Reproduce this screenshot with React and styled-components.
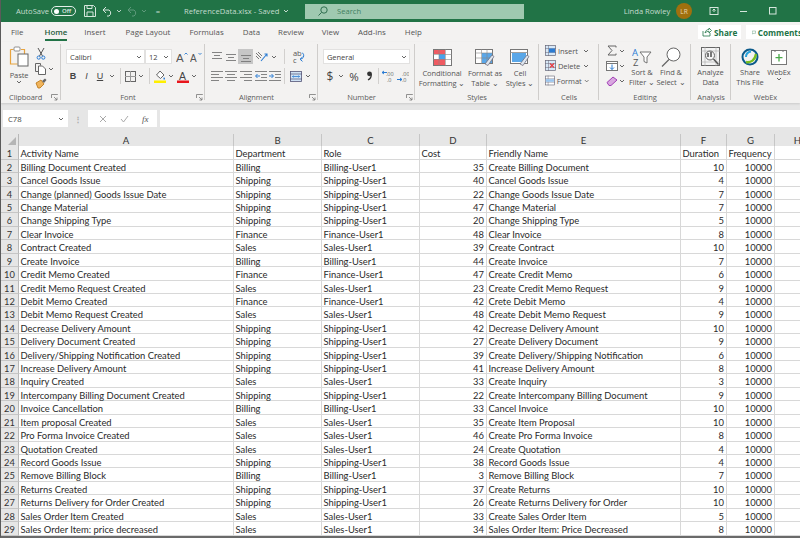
import React from "react";
import styled, { createGlobalStyle } from "styled-components";

const Global = createGlobalStyle`
  html, body { margin: 0; padding: 0; background: #f3f2f1; }
  #root { width: 800px; height: 538px; overflow: hidden; }
`;

const UI = `"Open Sans", "Noto Sans", sans-serif`;

const Page = styled.div`
  width: 800px; height: 538px; box-sizing: border-box; overflow: hidden;
  display: flex; flex-direction: column;
  border-left: 1px solid #5a5a5a; border-bottom: 2px solid #6a6a6a;
  background: #e6e6e6; font-family: ${UI}; color: #444;
`;

/* ---------- title bar ---------- */
const TitleBar = styled.div`
  height: 22px; flex: none; background: #217346; color: #c4dccf;
  display: flex; align-items: center; font-size: 7.6px; overflow: hidden;
`;
const TitleCell = styled.div`
  flex: none; width: ${p => p.$w}px; margin-left: ${p => p.$ml || 0}px;
  display: flex; align-items: center; justify-content: ${p => p.$left ? "flex-start" : "center"};
  white-space: nowrap;
`;
const Toggle = styled.div`
  width: 25px; height: 10px; box-sizing: border-box; border: 1px solid #e4efe9; border-radius: 6px;
  display: flex; align-items: center; gap: 3px; padding-left: 2px; font-size: 6px; color: #e4efe9; font-weight: 600;
  &::before { content: ""; width: 5px; height: 5px; border-radius: 50%; background: #fff; }
`;
const SearchBox = styled.div`
  width: 219px; height: 15px; flex: none; background: #9fc9b0; color: #3f7f5f;
  display: flex; align-items: center; gap: 9px; padding-left: 13px; box-sizing: border-box; font-size: 7.6px;
`;
const Avatar = styled.div`
  width: 16px; height: 16px; border-radius: 50%; background: #a0700e; color: #e8d9b8;
  font-size: 6.5px; display: flex; align-items: center; justify-content: center; flex: none;
`;

/* ---------- tabs ---------- */
const TabBar = styled.div`
  height: 20px; flex: none; background: #f3f2f1; display: flex; align-items: center;
  padding-left: 10px; font-size: 7.9px; position: relative; color: #555;
`;
const Tab = styled.div`
  margin-right: ${p => p.$mr}px; position: relative; white-space: nowrap; line-height: 20px;
  ${p => p.$active && `color: #1f5c3c; font-weight: 600;
    &::after { content: ""; position: absolute; left: 0; right: 0; bottom: 1px; height: 2px; background: #217346; }`}
`;
const TabSpacer = styled.div`flex: 1;`;
const ActionButton = styled.div`
  height: 14px; width: ${p => p.$w}px; margin-right: ${p => p.$mr || 0}px; flex: none; background: #fff; color: #217346; font-weight: 700; font-size: 8.2px;
  display: flex; align-items: center; gap: 2px; padding-left: ${p => p.$pl}px; box-sizing: border-box; overflow: hidden; white-space: nowrap;
`;

/* ---------- ribbon ---------- */
const Ribbon = styled.div`
  height: 61px; flex: none; background: #f3f2f1; display: flex;
  box-shadow: 0 1px 2px rgba(0,0,0,.12); font-size: 7.5px; letter-spacing: -.08px; position: relative;
`;
const Group = styled.div`
  width: ${p => p.$w}px; flex: none; box-sizing: border-box; display: flex; flex-direction: column; position: relative;
  &::after { content: ""; position: absolute; right: 0; top: 2px; bottom: 3px; width: 1px; background: ${p => p.$nosep ? "transparent" : "#cfcdcb"}; }
`;
const GroupBody = styled.div`
  height: 49px; flex: none; display: flex; box-sizing: border-box; padding-left: ${p => p.$pl || 0}px;
`;
const GroupLabel = styled.div`
  flex: 1; text-align: ${p => p.$left ? "left" : "center"}; font-size: 7.5px; line-height: 13px; color: #5c5c5c;
  padding-left: ${p => p.$left ? 8 : 0}px; padding-right: ${p => p.$pr || 0}px;
`;
const Launcher = styled.svg`
  position: absolute; right: ${p => p.$r}px; bottom: 2px; width: 7px; height: 7px;
`;
const Stack = styled.div`
  display: flex; flex-direction: column; width: ${p => p.$w ? `${p.$w}px` : "auto"};
  padding-top: ${p => p.$pt ?? 7}px; gap: ${p => p.$gap ?? 4}px;
`;
const ToolRow = styled.div`
  display: flex; align-items: center; height: ${p => p.$h || 16}px;
`;
const Tool = styled.div`
  width: ${p => p.$w}px; height: 100%; flex: none; display: flex; align-items: center; justify-content: center;
  color: #444; font-size: ${p => p.$fs || 9}px; font-weight: ${p => p.$fw || 400}; font-style: ${p => p.$it ? "italic" : "normal"};
  text-decoration: ${p => p.$ul ? "underline" : "none"}; font-family: ${p => p.$serif ? `"Liberation Sans", sans-serif` : "inherit"};
  background: ${p => p.$active ? "#c6c6c6" : "transparent"};
`;
const Separator = styled.div`
  width: ${p => p.$w}px; flex: none; height: 100%; display: flex; justify-content: center;
  &::before { content: ""; width: 1px; background: #d2d0ce; height: 100%; }
`;
const LargeButton = styled.div`
  width: ${p => p.$w}px; flex: none; display: flex; flex-direction: column; align-items: center;
  padding-top: ${p => p.$pt ?? 5}px; color: #555; text-align: center; line-height: 10.2px; white-space: nowrap;
`;
const LargeIcon = styled.div`
  height: ${p => p.$h || 21}px; flex: none; display: flex; align-items: center; justify-content: center;
`;
const PasteLabel = styled.span`margin-top: 3px;`;
const InputBox = styled.div`
  width: ${p => p.$w}px; height: 15px; flex: none; box-sizing: border-box; background: #fff; color: #444; font-size: 7.5px;
  display: flex; align-items: center; justify-content: space-between; padding: 0 2px 0 3px;
  border: 1px solid #e2e1e0; margin-right: ${p => p.$mr || 0}px;
`;
const CellCmd = styled.div`
  display: flex; align-items: center; height: 15px; gap: 2px; width: 44px; color: #555; font-size: 7.5px;
  span { flex: 1; }
`;

/* ---------- formula ---------- */
const FormulaBar = styled.div`
  flex: none; height: 17px; margin-top: 7px; display: flex; background: #e6e6e6;
`;
const NameBox = styled.div`
  width: 65px; margin-left: 2px; background: #fff; font-size: 7.7px; color: #444; box-sizing: border-box;
  display: flex; align-items: center; justify-content: space-between; padding: 0 4px 0 5px; flex: none;
`;
const Grip = styled.div`
  width: 20px; flex: none; display: flex; align-items: center; justify-content: center; color: #aaa; font-size: 8px; font-weight: 700;
`;
const FnBox = styled.div`
  width: 69px; flex: none; background: #fff; display: flex; align-items: center; justify-content: space-around; padding: 0 2px 0 4px; box-sizing: border-box; color: #999;
`;
const FxLabel = styled.span`
  font-family: "Liberation Serif", serif; font-style: italic; font-size: 9px; color: #555;
`;
const FormulaInput = styled.div`
  flex: 1; background: #fff; margin-left: 3px;
`;

/* ---------- sheet ---------- */
const Sheet = styled.div`
  margin-top: 7px; flex: 1; background: #fff; display: grid; overflow: hidden;
  grid-template-columns: 18px 215px 88px 98px 67px 194px 46px 48px 46px;
  grid-template-rows: 12.3px repeat(29, 13.43px); font-family: Lato, "Liberation Sans", sans-serif; font-size: 9.38px; color: #2a2a2a;
`;
const Corner = styled.div`
  background: #e6e6e6; border-right: 1px solid #b8b8b8; display: flex; align-items: flex-end; justify-content: flex-end; padding: 0 2px 1px 0; box-sizing: border-box;
`;
const ColHead = styled.div`
  background: #e6e6e6; border-right: 1px solid #c6c6c6; box-sizing: border-box; text-align: center; line-height: 14px; color: #333; font-size: 9.6px;
`;
const RowHead = styled.div`
  background: #e6e6e6; border-right: 1px solid #b8b8b8; border-bottom: 1px solid #c6c6c6; box-sizing: border-box; text-align: center; line-height: 15px; color: #333; font-size: 9.3px;
`;
const Cell = styled.div`
  box-sizing: border-box; border-right: 1px solid #d8d8d8; border-bottom: 1px solid #d8d8d8; padding: 0 2px 0 1.5px;
  line-height: 15px; white-space: nowrap; overflow: visible; text-align: ${p => p.$num ? "right" : "left"};
`;

/* ---------- icons ---------- */
const Svg = ({ w = 14, h = 14, vb, children }) => (
  <svg width={w} height={h} viewBox={vb || `0 0 ${w} ${h}`} fill="none" stroke="none">{children}</svg>
);
const Chev = ({ c = "#666" }) => (
  <Svg w={6} h={4}><path d="M1 1l2 2 2-2" stroke={c} strokeWidth="1" /></Svg>
);
const LaunchIcon = ({ r }) => (
  <Launcher $r={r} viewBox="0 0 7 7" fill="none"><path d="M.5 4V.5H6.5V1M3 3l3 3M6 3.5V6H3.5" stroke="#777" strokeWidth=".8" /></Launcher>
);
const Lines = ({ kind = "left", w = 12 }) => {
  const widths = [12, 8, 12, 8];
  return (
    <Svg w={w} h={12}>
      {widths.map((l, i) => {
        const x = kind === "left" ? 0 : kind === "right" ? 12 - l : (12 - l) / 2;
        return <path key={i} d={`M${x} ${1.5 + i * 3}h${l}`} stroke="#777" strokeWidth=".9" />;
      })}
    </Svg>
  );
};
const VAlign = ({ y }) => (
  <Svg w={12} h={12}>
    <path d={`M1 ${y}h10M3 ${y + 3}h6M1 ${y + 6}h10`} stroke="#777" strokeWidth=".9" />
  </Svg>
);
const Indent = ({ flip }) => (
  <Svg w={12} h={12}>
    <path d="M0 1.5h12M6 4.5h6M6 7.5h6M0 10.5h12" stroke="#777" strokeWidth=".9" />
    <path d={flip ? "M0 6h4M2.5 4l2 2-2 2" : "M5 6H1M2.5 4l-2 2 2 2"} stroke="#2b7cd3" strokeWidth="1" />
  </Svg>
);
const PasteIcon = () => (
  <Svg w={20} h={21}>
    <path d="M1.5 3.5h3M12 3.5h3.5V8M1.5 3.5V18h7" stroke="#e8a33d" strokeWidth="1.2" />
    <rect x="5" y="1" width="6" height="4" rx="1" fill="#fff" stroke="#777" strokeWidth=".8" />
    <rect x="9" y="8" width="10" height="12" fill="#fff" stroke="#666" strokeWidth="1" />
  </Svg>
);
const CutIcon = () => (
  <Svg w={10} h={12}>
    <path d="M2 0l4.5 8M8 0L3.5 8" stroke="#555" strokeWidth="1" />
    <circle cx="2.7" cy="9.6" r="1.6" stroke="#2b7cd3" /><circle cx="7.3" cy="9.6" r="1.6" stroke="#2b7cd3" />
  </Svg>
);
const CopyIcon = () => (
  <Svg w={11} h={12}>
    <path d="M.5.5h5v2M.5.5v8h2.5" stroke="#666" /><path d="M3.5 3h4l3 3v5.5h-7z" fill="#fff" stroke="#666" />
  </Svg>
);
const PainterIcon = () => (
  <Svg w={12} h={11}>
    <path d="M1 5l5-3 3 4-4 4H3z" fill="#f0b45c" stroke="#b9720f" strokeWidth=".8" />
    <path d="M7 3l3-2.5 1.5 1.5L9 5z" fill="#666" />
  </Svg>
);
const GrowA = ({ small }) => (
  <Svg w={12} h={12}>
    <text x="0" y="10.5" fontFamily="Liberation Sans" fontSize={small ? 10 : 11.5} fill="#555">A</text>
    <path d={small ? "M8.5 2l1.5 1.5L11.5 2" : "M8.5 3.5L10 2l1.5 1.5"} stroke="#2b7cd3" strokeWidth=".9" />
  </Svg>
);
const BorderIcon = () => (
  <Svg w={11} h={11}><rect x=".5" y=".5" width="10" height="10" stroke="#666" /><path d="M5.5 0v11M0 5.5h11" stroke="#999" /></Svg>
);
const FillIcon = () => (
  <Svg w={12} h={13}>
    <path d="M6 1l4 4-3.5 3.5L2.5 5z" stroke="#555" strokeWidth=".9" fill="#fff" />
    <path d="M10 7c.8 1 1.2 1.6 1 2.2-.3.6-1.5.5-1.6-.2 0-.5.3-1.2.6-2z" fill="#2b7cd3" />
    <rect y="10.5" width="12" height="2.5" fill="#ffef00" />
  </Svg>
);
const ColorA = () => (
  <Svg w={12} h={13}>
    <text x="2" y="9.5" fontFamily="Liberation Sans" fontSize="10.5" fill="#444">A</text>
    <rect y="10.5" width="12" height="2.5" fill="#e8151c" />
  </Svg>
);
const Orient = () => (
  <Svg w={13} h={12}>
    <path d="M1 2l5 5M3 1l4 4M1 5l3 3" stroke="#777" />
    <path d="M6 10L12 3M9.5 3H12v2.5" stroke="#2b7cd3" strokeWidth="1.1" />
  </Svg>
);
const Wrap = () => (
  <Svg w={13} h={15}>
    <text x="1" y="6.5" fontFamily="Open Sans" fontSize="7.5" fill="#555">ab</text>
    <text x="1" y="13.5" fontFamily="Open Sans" fontSize="7.5" fill="#555">c</text>
    <path d="M10 4c2.5 0 2.5 6-1.5 6M10.5 8L8 10.2l2.5 2.2" stroke="#2b7cd3" strokeWidth="1" />
  </Svg>
);
const Merge = () => (
  <Svg w={12} h={11}>
    <rect x=".5" y=".5" width="11" height="10" fill="#cfe2f5" stroke="#557" strokeWidth=".8" />
    <path d="M0 3h12M0 8h12" stroke="#557" strokeWidth=".7" />
    <path d="M2.5 5.5h7M3.5 4.5l-1 1 1 1M8.5 4.5l1 1-1 1" stroke="#2b7cd3" strokeWidth=".8" />
  </Svg>
);
const Decimal = ({ flip }) => (
  <Svg w={12} h={13}>
    <text x={flip ? 5 : 4} y="5.5" fontFamily="Open Sans" fontSize="5.5" fill="#666">.00</text>
    <text x="5" y="12" fontFamily="Open Sans" fontSize="5.5" fill="#666">.0</text>
    <path d={flip ? "M0 9.5h5M3 8l2 1.5L3 11" : "M5 2.5H0M2 1L0 2.5 2 4"} stroke="#2b7cd3" strokeWidth="1" />
  </Svg>
);
const CommaIcon = () => (
  <Svg w={7} h={10}>
    <circle cx="3.5" cy="2.8" r="2.4" fill="#333" />
    <path d="M5.2 3c.3 2.800-1 4.800-3.200 6" stroke="#333" strokeWidth="1.300" />
  </Svg>
);
const CondIcon = () => (
  <Svg w={19} h={17}>
    <rect x=".5" y=".5" width="18" height="16" fill="#fff" stroke="#777" />
    <rect x="1" y="1" width="11" height="4" fill="#ef5b62" /><rect x="6" y="5" width="6" height="5" fill="#4aa2ea" /><rect x="1" y="10" width="11" height="6" fill="#ef5b62" />
    <path d="M6 0v17M12.500 0v17M0 5.500h19M0 10.500h19" stroke="#888" strokeWidth=".6" />
  </Svg>
);
const TableIcon = () => (
  <Svg w={20} h={17}>
    <rect x=".5" y=".5" width="17" height="14" fill="#fff" stroke="#777" />
    <rect x="7" y="4" width="10" height="10" fill="#5aa7e8" />
    <path d="M0 4h18M6.500 0v15M12 0v15M0 9h18" stroke="#888" strokeWidth=".6" />
    <path d="M10 15l7-9 2 1.500-6 9z" fill="#dfe6ee" stroke="#667" strokeWidth=".7" />
  </Svg>
);
const StylesIcon = () => (
  <Svg w={20} h={17}>
    <rect x=".5" y=".5" width="17" height="14" fill="#fff" stroke="#777" />
    <rect x="2" y="4" width="14" height="9" fill="#5aa7e8" />
    <path d="M0 3.500h18" stroke="#888" strokeWidth=".8" />
    <path d="M10 15l7-9 2 1.500-6 9z" fill="#dfe6ee" stroke="#667" strokeWidth=".7" />
  </Svg>
);
const CellCmdIcon = ({ kind }) => (
  <Svg w={11} h={11}>
    <rect x=".5" y=".5" width="10" height="10" fill={kind === "format" ? "#fff" : "#d7e8f7"} stroke="#667" strokeWidth=".7" />
    <path d="M0 3.500h11M0 7.500h11M3.500 0v11" stroke="#667" strokeWidth=".5" />
    {kind === "insert" && <rect x="4" y="3.500" width="6" height="4" fill="#2b7cd3" />}
    {kind === "delete" && <path d="M5 3.500l4 4M9 3.500l-4 4" stroke="#e8353b" strokeWidth="1.1" />}
    {kind === "format" && <rect x="1" y="4" width="9" height="3" fill="#9cc6ee" />}
  </Svg>
);
const Sigma = () => (
  <Svg w={10} h={11}><path d="M9 2.500V1H1l4 4.500L1 10h8V8.500" stroke="#666" strokeWidth="1" /></Svg>
);
const FillDown = () => (
  <Svg w={12} h={10}><rect x=".5" y=".5" width="11" height="9" fill="#fff" stroke="#777" /><path d="M0 2.500h12" stroke="#777" /><path d="M6 3.500v5M4 6.500l2 2 2-2" stroke="#2b7cd3" /></Svg>
);
const Eraser = () => (
  <Svg w={12} h={10}><path d="M1 6.500L7 1l4 3-6 5.500H3z" fill="#d9a7e0" stroke="#a13fb5" strokeWidth="1" /></Svg>
);
const SortIcon = () => (
  <Svg w={20} h={20}>
    <text x="0" y="8.500" fontFamily="Open Sans" fontSize="9.500" fill="#2b7cd3">A</text>
    <text x="1" y="18.500" fontFamily="Open Sans" fontSize="9.500" fill="#555">Z</text>
    <path d="M8 5h11l-4 5v6l-3-1.500V10z" fill="#fff" stroke="#666" strokeWidth=".9" />
  </Svg>
);
const FindIcon = () => (
  <Svg w={20} h={20}>
    <circle cx="12.500" cy="7.500" r="6.500" fill="#fff" stroke="#666" strokeWidth="1" />
    <path d="M8 12.500L1 19.500" stroke="#666" strokeWidth="1.200" />
  </Svg>
);
const AnalyzeIcon = () => (
  <Svg w={20} h={20}>
    <rect x=".5" y=".5" width="18" height="18" fill="#f4f4f4" stroke="#666" />
    <path d="M0 4h19M0 15h19M4 0v19M15 0v19" stroke="#aaa" strokeWidth=".6" />
    <rect x="6" y="6" width="2" height="4" fill="#777" /><rect x="9" y="5" width="2" height="5" fill="#777" />
    <circle cx="9" cy="8.500" r="4.500" stroke="#666" strokeWidth="1" />
    <path d="M12.500 12l5 5.500" stroke="#555" strokeWidth="1.500" />
  </Svg>
);
const ShareFileIcon = () => (
  <Svg w={18} h={18}>
    <circle cx="9" cy="9" r="7.500" stroke="#0b5a8a" strokeWidth="2" />
    <path d="M5 14c5 1 9-2 10-8" stroke="#78be20" strokeWidth="2.400" />
    <path d="M5 9c0-3 2-5 5-5.500" stroke="#27a3dd" strokeWidth="2" />
  </Svg>
);
const WebExIcon = () => (
  <Svg w={16} h={16}>
    <rect x=".5" y="1.500" width="15" height="14" fill="#fff" stroke="#777" />
    <path d="M4 1V3M12 1V3" stroke="#777" />
    <path d="M8 5v7.500M4.500 8.700h7" stroke="#4aa84a" strokeWidth="1.300" />
  </Svg>
);
const SaveIcon = () => (
  <Svg w={12} h={12}>
    <path d="M.5.500h9l2 2v9H.5z" stroke="#d5e6dc" /><path d="M3 .500v3h5v-3M3 11.500V7h6v4.500" stroke="#d5e6dc" />
  </Svg>
);
const UndoIcon = ({ dim }) => (
  <Svg w={12} h={11}>
    <path d="M4 1L1 4l3 3M1 4h6a3.500 3.500 0 010 6H5" stroke={dim ? "#5f9a7c" : "#d5e6dc"} strokeWidth="1" />
  </Svg>
);
const Magnifier = () => (
  <Svg w={10} h={10}><circle cx="6" cy="4" r="3.200" stroke="#2f6f4f" /><path d="M3.500 6.500L.5 9.500" stroke="#2f6f4f" /></Svg>
);
const Win = ({ kind }) => (
  <Svg w={10} h={10}>
    {kind === "ribbon" && <><rect x="1" y="1.500" width="8" height="7" stroke="#d5e6dc" /><path d="M5 3v3M3.500 4.500L5 3l1.500 1.500" stroke="#d5e6dc" /></>}
    {kind === "min" && <path d="M1 5.500h7" stroke="#d5e6dc" />}
    {kind === "max" && <rect x="1.500" y="1.500" width="6.500" height="6.500" stroke="#d5e6dc" />}
  </Svg>
);
const Corn = () => <Svg w={8} h={8}><path d="M8 0v8H0z" fill="#b5b5b5" /></Svg>;
const ShareGlyph = () => (
  <Svg w={10} h={10}><path d="M1 4v5h7V6M3 6c.5-2.500 2-3.500 4-3.500V1l2.500 2.500L7 6V4.300C5.500 4.300 4 5 3 6z" stroke="#217346" strokeWidth=".8" /></Svg>
);
const Bubble = () => (
  <Svg w={9} h={9}><path d="M.5 1h8v5.500H3.500L1.500 8.500v-2h-1z" stroke="#217346" strokeWidth=".8" /></Svg>
);

/* ---------- data ---------- */
const S = ["Shipping", "Shipping-User1"], L = ["Sales", "Sales-User1"], B = ["Billing", "Billing-User1"], N = ["Finance", "Finance-User1"];
const rows = [
  ["Billing Document Created", B, 35, "Create Billing Document", 10],
  ["Cancel Goods Issue", S, 40, "Cancel Goods Issue", 4],
  ["Change (planned) Goods Issue Date", S, 22, "Change Goods Issue Date", 7],
  ["Change Material", S, 47, "Change Material", 7],
  ["Change Shipping Type", S, 20, "Change Shipping Type", 5],
  ["Clear Invoice", N, 48, "Clear Invoice", 8],
  ["Contract Created", L, 39, "Create Contract", 10],
  ["Create Invoice", B, 44, "Create Invoice", 7],
  ["Credit Memo Created", N, 47, "Create Credit Memo", 6],
  ["Credit Memo Request Created", L, 23, "Create Credit Memo Request", 9],
  ["Debit Memo Created", N, 42, "Crete Debit Memo", 4],
  ["Debit Memo Request Created", L, 48, "Create Debit Memo Request", 9],
  ["Decrease Delivery Amount", S, 42, "Decrease Delivery Amount", 10],
  ["Delivery Document Created", S, 27, "Create Delivery Document", 9],
  ["Delivery/Shipping Notification Created", S, 39, "Create Delivery/Shipping Notification", 6],
  ["Increase Delivery Amount", S, 41, "Increase Delivery Amount", 8],
  ["Inquiry Created", L, 33, "Create Inquiry", 3],
  ["Intercompany Billing Document Created", S, 22, "Create Intercompany Billing Document", 9],
  ["Invoice Cancellation", B, 33, "Cancel Invoice", 10],
  ["Item proposal Created", L, 35, "Create Item Proposal", 10],
  ["Pro Forma Invoice Created", L, 46, "Create Pro Forma Invoice", 8],
  ["Quotation Created", L, 24, "Create Quotation", 4],
  ["Record Goods Issue", S, 38, "Record Goods Issue", 4],
  ["Remove Billing Block", B, 3, "Remove Billing Block", 7],
  ["Returns Created", S, 37, "Create Returns", 10],
  ["Returns Delivery for Order Created", S, 26, "Create Returns Delivery for Order", 10],
  ["Sales Order Item Created", L, 33, "Create Sales Order Item", 5],
  ["Sales Order Item: price decreased", L, 34, "Sales Order Item: Price Decreased", 8],
];
const tabs = [["File", 21], ["Home", 17, true], ["Insert", 20], ["Page Layout", 19], ["Formulas", 19], ["Data", 18], ["Review", 18], ["View", 19], ["Add-ins", 19], ["Help", 0]];

export default function App() {
  return (
    <Page>
      <Global />
      <TitleBar>
        <TitleCell $w={35} $ml={14}>AutoSave</TitleCell>
        <TitleCell $w={27}><Toggle>Off</Toggle></TitleCell>
        <TitleCell $w={12} $ml={7}><SaveIcon /></TitleCell>
        <TitleCell $w={14} $ml={5}><UndoIcon /></TitleCell>
        <TitleCell $w={8}><Chev c="#b9d4c6" /></TitleCell>
        <TitleCell $w={14} $ml={3}><UndoIcon dim /></TitleCell>
        <TitleCell $w={8}><Chev c="#5f9a7c" /></TitleCell>
        <TitleCell $w={8} $ml={6}>=</TitleCell>
        <TitleCell $w={121} $ml={22} $left>ReferenceData.xlsx&nbsp;-&nbsp;Saved&nbsp;&nbsp;<Chev c="#c4dccf" /></TitleCell>
        <SearchBox><Magnifier />Search</SearchBox>
        <TitleCell $w={50} $ml={98}>Linda Rowley</TitleCell>
        <TitleCell $w={16} $ml={4}><Avatar>LR</Avatar></TitleCell>
        <TitleCell $w={12} $ml={16}><Win kind="ribbon" /></TitleCell>
        <TitleCell $w={12} $ml={18}><Win kind="min" /></TitleCell>
        <TitleCell $w={12} $ml={17}><Win kind="max" /></TitleCell>
      </TitleBar>

      <TabBar>
        {tabs.map(([t, m, a]) => <Tab key={t} $mr={m} $active={a}>{t}</Tab>)}
        <TabSpacer />
        <ActionButton $w={43} $mr={5} $pl={4}><ShareGlyph />Share</ActionButton>
        <ActionButton $w={56} $mr={-2} $pl={6}><Bubble />Comments</ActionButton>
      </TabBar>

      <Ribbon>
        <Group $w={60}>
          <GroupBody $pl={3}>
            <LargeButton $w={30} $pt={4}>
              <PasteIcon />
              <PasteLabel>Paste</PasteLabel>
              <Chev />
            </LargeButton>
            <Stack $pt={4} $gap={0}>
              <ToolRow $h={15}><Tool $w={13}><CutIcon /></Tool></ToolRow>
              <ToolRow $h={15}><Tool $w={13}><CopyIcon /></Tool><Tool $w={7}><Chev /></Tool></ToolRow>
              <ToolRow $h={15}><Tool $w={13}><PainterIcon /></Tool></ToolRow>
            </Stack>
          </GroupBody>
          <GroupLabel $left>Clipboard</GroupLabel>
          <LaunchIcon r={3} />
        </Group>

        <Group $w={144}>
          <GroupBody $pl={5}>
            <Stack $pt={7} $gap={4}>
              <ToolRow $h={15}>
                <InputBox $w={79}>Calibri<Chev /></InputBox>
                <InputBox $w={27} $mr={3}>12<Chev /></InputBox>
                <Tool $w={14}><GrowA /></Tool>
                <Tool $w={14}><GrowA small /></Tool>
              </ToolRow>
              <ToolRow>
                <Tool $w={14} $fw={700} $serif>B</Tool>
                <Tool $w={13} $it $serif>I</Tool>
                <Tool $w={14} $ul $serif>U</Tool>
                <Tool $w={10}><Chev /></Tool>
                <Separator $w={6} />
                <Tool $w={14}><BorderIcon /></Tool>
                <Tool $w={8}><Chev /></Tool>
                <Separator $w={8} />
                <Tool $w={14}><FillIcon /></Tool>
                <Tool $w={8}><Chev /></Tool>
                <Tool $w={15}><ColorA /></Tool>
                <Tool $w={7}><Chev /></Tool>
              </ToolRow>
            </Stack>
          </GroupBody>
          <GroupLabel $pr={10}>Font</GroupLabel>
          <LaunchIcon r={2} />
        </Group>

        <Group $w={113}>
          <GroupBody $pl={5}>
            <Stack $pt={7} $gap={4}>
              <ToolRow $h={15}>
                <Tool $w={14}><VAlign y={1.5} /></Tool>
                <Tool $w={14}><VAlign y={3.5} /></Tool>
                <Tool $w={15} $active><VAlign y={4.5} /></Tool>
                <Tool $w={16}><Orient /></Tool>
                <Tool $w={9}><Chev /></Tool>
                <Separator $w={12} />
                <Tool $w={16}><Wrap /></Tool>
              </ToolRow>
              <ToolRow>
                <Tool $w={14}><Lines kind="left" /></Tool>
                <Tool $w={14}><Lines kind="center" /></Tool>
                <Tool $w={15}><Lines kind="right" /></Tool>
                <Tool $w={15}><Indent /></Tool>
                <Tool $w={14}><Indent flip /></Tool>
                <Separator $w={5} />
                <Tool $w={17}><Merge /></Tool>
                <Tool $w={8}><Chev /></Tool>
              </ToolRow>
            </Stack>
          </GroupBody>
          <GroupLabel $pr={10}>Alignment</GroupLabel>
          <LaunchIcon r={2} />
        </Group>

        <Group $w={97}>
          <GroupBody $pl={5}>
            <Stack $pt={7} $gap={4}>
              <ToolRow $h={15}>
                <InputBox $w={87}>General<Chev /></InputBox>
              </ToolRow>
              <ToolRow>
                <Tool $w={14} $fs={12}>$</Tool>
                <Tool $w={8}><Chev /></Tool>
                <Tool $w={18} $fs={11.5}>%</Tool>
                <Tool $w={13}><CommaIcon /></Tool>
                <Separator $w={5} />
                <Tool $w={14}><Decimal /></Tool>
                <Tool $w={15}><Decimal flip /></Tool>
              </ToolRow>
            </Stack>
          </GroupBody>
          <GroupLabel $pr={10}>Number</GroupLabel>
          <LaunchIcon r={2} />
        </Group>

        <Group $w={124}>
          <GroupBody $pl={4}>
            <LargeButton $w={46}><LargeIcon><CondIcon /></LargeIcon>Conditional<br />Formatting ⌄</LargeButton>
            <LargeButton $w={40}><LargeIcon><TableIcon /></LargeIcon>Format as<br />Table ⌄</LargeButton>
            <LargeButton $w={30}><LargeIcon><StylesIcon /></LargeIcon>Cell<br />Styles ⌄</LargeButton>
          </GroupBody>
          <GroupLabel>Styles</GroupLabel>
        </Group>

        <Group $w={60}>
          <GroupBody $pl={6}>
            <Stack $pt={1} $gap={0}>
              <CellCmd><CellCmdIcon kind="insert" /><span>Insert</span><Chev /></CellCmd>
              <CellCmd><CellCmdIcon kind="delete" /><span>Delete</span><Chev /></CellCmd>
              <CellCmd><CellCmdIcon kind="format" /><span>Format</span><Chev /></CellCmd>
            </Stack>
          </GroupBody>
          <GroupLabel>Cells</GroupLabel>
        </Group>

        <Group $w={92}>
          <GroupBody $pl={6}>
            <Stack $pt={1} $gap={0} $w={22}>
              <ToolRow $h={15}><Tool $w={13}><Sigma /></Tool><Tool $w={8}><Chev /></Tool></ToolRow>
              <ToolRow $h={15}><Tool $w={13}><FillDown /></Tool><Tool $w={8}><Chev /></Tool></ToolRow>
              <ToolRow $h={15}><Tool $w={13}><Eraser /></Tool><Tool $w={8}><Chev /></Tool></ToolRow>
            </Stack>
            <LargeButton $w={30} $pt={4}><LargeIcon><SortIcon /></LargeIcon>Sort &amp;<br />Filter ⌄</LargeButton>
            <LargeButton $w={28} $pt={4}><LargeIcon><FindIcon /></LargeIcon>Find &amp;<br />Select ⌄</LargeButton>
          </GroupBody>
          <GroupLabel>Editing</GroupLabel>
        </Group>

        <Group $w={40}>
          <GroupBody>
            <LargeButton $w={39} $pt={4}><LargeIcon><AnalyzeIcon /></LargeIcon>Analyze<br />Data</LargeButton>
          </GroupBody>
          <GroupLabel>Analysis</GroupLabel>
        </Group>

        <Group $w={69} $nosep>
          <GroupBody $pl={3}>
            <LargeButton $w={32} $pt={4}><LargeIcon><ShareFileIcon /></LargeIcon>Share<br />This File</LargeButton>
            <LargeButton $w={26} $pt={4}><LargeIcon><WebExIcon /></LargeIcon>WebEx<br /><Chev /></LargeButton>
          </GroupBody>
          <GroupLabel>WebEx</GroupLabel>
        </Group>
      </Ribbon>

      <FormulaBar>
        <NameBox>C78<Chev /></NameBox>
        <Grip>⋮</Grip>
        <FnBox>
          <Svg w={8} h={8}><path d="M1 1l6 6M7 1L1 7" stroke="#aaa" /></Svg>
          <Svg w={9} h={8}><path d="M1 4l2.500 3L8 1" stroke="#aaa" /></Svg>
          <FxLabel>fx</FxLabel>
        </FnBox>
        <FormulaInput />
      </FormulaBar>

      <Sheet>
        <Corner><Corn /></Corner>
        {["A", "B", "C", "D", "E", "F", "G", "H"].map(c => <ColHead key={c}>{c}</ColHead>)}
        <RowHead>1</RowHead>
        {["Activity Name", "Department", "Role", "Cost", "Friendly Name", "Duration", "Frequency", ""].map((t, i) => <Cell key={i}>{t}</Cell>)}
        {rows.map((r, i) => (
          <React.Fragment key={i}>
            <RowHead>{i + 2}</RowHead>
            <Cell>{r[0]}</Cell>
            <Cell>{r[1][0]}</Cell>
            <Cell>{r[1][1]}</Cell>
            <Cell $num>{r[2]}</Cell>
            <Cell>{r[3]}</Cell>
            <Cell $num>{r[4]}</Cell>
            <Cell $num>10000</Cell>
            <Cell />
          </React.Fragment>
        ))}
      </Sheet>
    </Page>
  );
}
